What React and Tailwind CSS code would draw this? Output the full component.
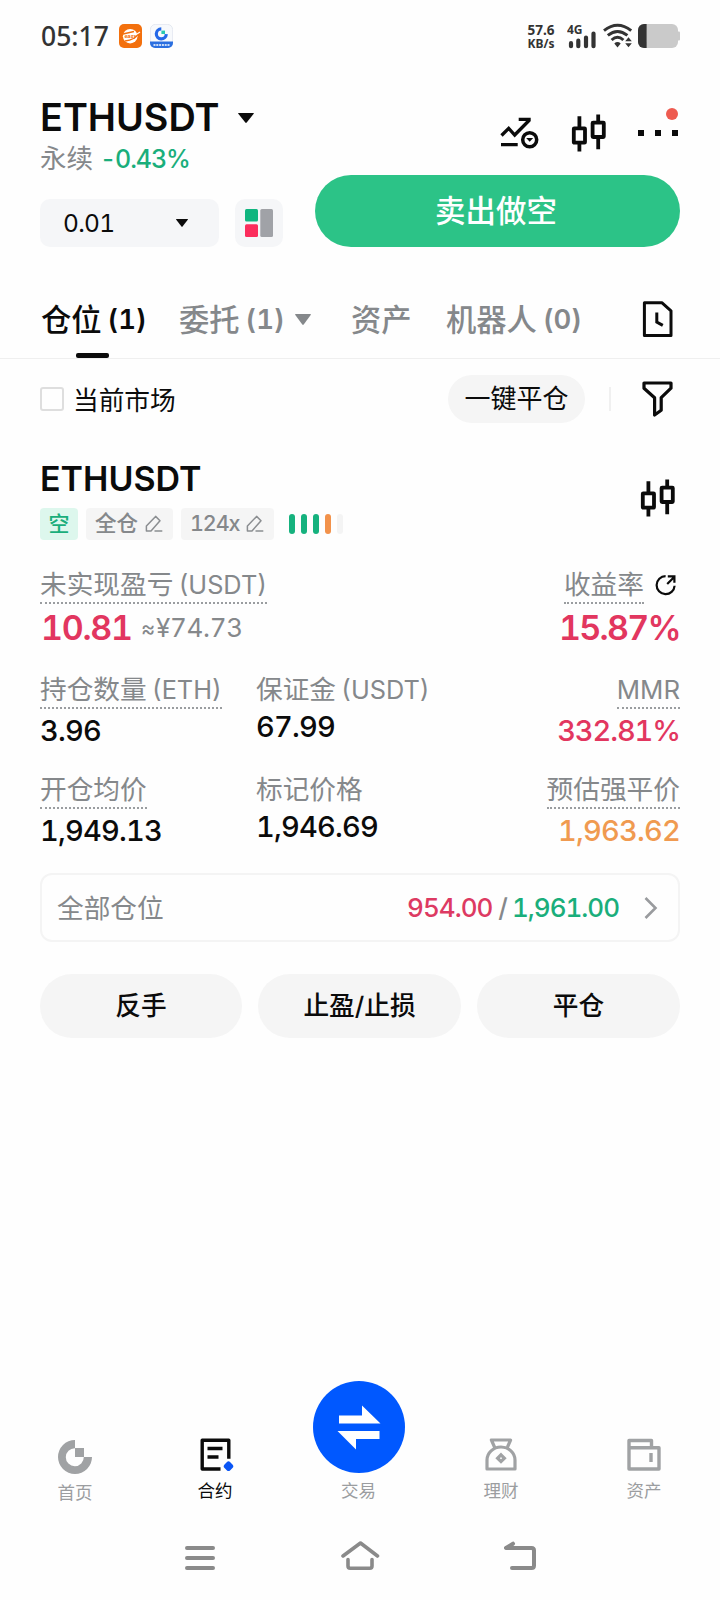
import React from 'react';

const tabs = [
    { label: '仓位', count: '(1)', active: true, style: 'w-[107px]' },
    { label: '委托', count: '(1)', caret: true, style: 'ml-[31px] w-[134px]' },
    { label: '资产', style: 'ml-[38px] w-[62px]' },
    { label: '机器人', count: '(0)', style: 'ml-[33px] w-[140px]' },
];

const CandleIcon = () => (
    <svg width="36" height="38" viewBox="0 0 36 38" fill="none" stroke="#0b0b0b" strokeWidth="3.8">
        <rect x="2.8" y="14.3" width="11.2" height="14.4" rx="0.5" />
        <path d="M8.4 2.3v12M8.4 28.7v8.8M27.2 .5v8.8M27.2 23v12.2" />
        <rect x="21.6" y="8.6" width="11.2" height="14.4" rx="0.5" />
    </svg>
);

const TrendIcon = () => (
    <svg width="40" height="34" viewBox="0 0 40 34" fill="none" stroke="#0b0b0b" strokeWidth="3.3">
        <path d="M1.5 19.5l7.2-7.2 6 6.7L29.5 4" />
        <path d="M18.7 3.4h12M1 28.7h16.7" />
        <circle cx="29.7" cy="23.7" r="7" strokeWidth="3.5" />
        <path d="M26.2 22h7l-3.5 3.8z" fill="#0b0b0b" stroke="none" />
    </svg>
);

const Caret = ({ className }) => (
    <svg className={className} viewBox="0 0 16 10" preserveAspectRatio="none" fill="currentColor">
        <path d="M.6 0h14.8q.8 0 .3.8L8.7 9.5q-.7.8-1.4 0L.3.8Q-.2 0 .6 0z" />
    </svg>
);

const PencilIcon = () => (
    <svg width="18" height="18" viewBox="0 0 18 18" fill="none" stroke="#8b8e91" strokeWidth="1.5">
        <path d="M1.4 16V11L10.6 1.4 15 5.8 6 16zM9.5 16h7.8" strokeLinejoin="round" />
    </svg>
);

const StatusBar = () => (
    <div className="flex h-[72px] shrink-0 items-center pl-[41px] pr-[40px] text-[#333]">
        <span className="w-[78px] whitespace-nowrap font-['Noto_Sans'] text-[26.5px] font-medium leading-none">05:17</span>
        <svg width="23" height="24" viewBox="0 0 23 24">
            <rect width="23" height="24" rx="5" fill="#f3700d" />
            <circle cx="11.2" cy="12.2" r="7.3" fill="#fff" />
            <path d="M4 10l11-2.5M6 17q10-1 14-8" stroke="#f3700d" strokeWidth="1.3" fill="none" />
            <path d="M18 10l3-2" stroke="#fff" strokeWidth="1.2" />
            <text x="5.4" y="14" fontSize="6" fontWeight="700" fontStyle="italic" fontFamily="Roboto, sans-serif" fill="#f3700d">easy</text>
        </svg>
        <svg className="ml-[8px]" width="23" height="24" viewBox="0 0 23 24">
            <rect x=".4" y=".4" width="22.2" height="23.2" rx="5" fill="#f7f9fc" stroke="#dfe5ee" strokeWidth=".8" />
            <path d="M0 17.6h23v1.4a5 5 0 0 1-5 5H5a5 5 0 0 1-5-5z" fill="#2b6fe0" />
            <path d="M11.3 4.9a5 5 0 1 0 5 5.3" fill="none" stroke="#2468e8" strokeWidth="3.2" />
            <rect x="11.4" y="6.6" width="3.6" height="3.4" fill="#27c9b0" />
            <path d="M3.5 21h16" stroke="#fff" strokeWidth="1.6" strokeDasharray="2 .8" />
        </svg>
        <div className="ml-auto w-[32px] whitespace-nowrap text-center font-['Noto_Sans'] text-[13.5px] font-bold leading-[14px]">
            <div>57.6</div>
            <div className="text-[12px] leading-[13px]">KB/s</div>
        </div>
        <svg className="ml-[10px]" width="30" height="32" viewBox="0 -3 30 32">
            <text x="0" y="10.5" fontSize="12" fontWeight="700" fontFamily="Noto Sans, sans-serif" fill="#333">4G</text>
            <path d="M4 20.2v3M11.3 17.7v5.5M19 14.6v8.6M26.5 10.6v12.6" stroke="#333" strokeWidth="4.2" strokeLinecap="round" />
        </svg>
        <svg className="ml-[6px]" width="30" height="26" viewBox="0 0 30 26" fill="none" stroke="#333" strokeWidth="3">
            <path d="M1 7.6Q14.5-3 28.2 7.6M4.8 12.4Q14.5 4.6 24.4 12.4M8.6 17Q14.5 11.6 20.4 17" />
            <path d="M14.5 24.4l-3.2-4q3.2-2.6 6.4 0z" fill="#333" stroke="none" />
            <path d="M22.2 18.3l3.3-4 3.3 4zM22.2 20.3h6.6l-3.3 4z" fill="#333" stroke="none" />
        </svg>
        <svg className="ml-[5px]" width="42" height="24" viewBox="0 0 42 24">
            <rect width="40" height="24" rx="6" fill="#cacaca" />
            <rect x="39" y="7.5" width="3" height="9" rx="1" fill="#cacaca" />
            <path d="M8.6 0v24H6a6 6 0 0 1-6-6V6a6 6 0 0 1 6-6z" fill="#333" />
        </svg>
    </div>
);

const Header = () => (
    <div className="flex h-[175px] shrink-0 justify-between px-[40px]">
        <div className="pt-[24px]">
            <div className="flex h-[44px] items-center">
                <h1 className="w-[198px] whitespace-nowrap text-[37.8px] font-semibold leading-none">ETHUSDT</h1>
                <Caret className="h-[10px] w-[16px]" />
            </div>
            <div className="flex h-[37px] items-center whitespace-nowrap">
                <span className="w-[60px] text-[26.5px] text-[#85888b]">永续</span>
                <span className="pt-[2px] text-[25px] font-medium tracking-[-1.1px] text-[#1aae7b]">-0.43%</span>
            </div>
            <div className="mt-[22px] flex gap-[16px]">
                <div className="flex h-[48px] w-[179px] items-center justify-between rounded-[10px] bg-[#f5f6f8] pl-[23px] pr-[31px]">
                    <span className="text-[24.5px] leading-none tracking-[-0.7px]">0.01</span>
                    <Caret className="h-[8px] w-[12px]" />
                </div>
                <div className="flex h-[48px] w-[48px] items-center justify-center rounded-[10px] bg-[#f5f6f8]">
                    <svg width="28" height="28" viewBox="0 0 28 28">
                        <rect width="13" height="12.5" rx="1.5" fill="#10b57f" />
                        <rect y="15.3" width="13" height="12.7" rx="1.5" fill="#fb2d5c" />
                        <rect x="15.3" width="12.7" height="28" rx="1.5" fill="#a0a2a7" />
                    </svg>
                </div>
            </div>
        </div>
        <div className="w-[365px] pt-[42px]">
            <div className="flex h-[38px] items-center justify-end">
                <TrendIcon />
                <div className="ml-[31px]"><CandleIcon /></div>
                <div className="relative ml-[31px] flex w-[42px] gap-[11px]">
                    <i className="h-[6px] w-[6px] bg-[#0b0b0b]" />
                    <i className="h-[6px] w-[6px] bg-[#0b0b0b]" />
                    <i className="h-[6px] w-[6px] bg-[#0b0b0b]" />
                    <b className="absolute right-[2px] top-[-22px] h-[12px] w-[12px] rounded-full bg-[#ee5b50]" />
                </div>
            </div>
            <button className="mt-[23px] block h-[72px] w-full rounded-full bg-[#2cc387] pr-[3px] pt-[1px] text-[30.5px] font-medium leading-none text-white">
                卖出做空
            </button>
        </div>
    </div>
);

const Tabs = () => (
    <div className="flex h-[112px] shrink-0 border-b border-[#efefef] pl-[41px] pt-[44px]">
        {tabs.map((tab) => (
            <div key={tab.label} className={tab.style}>
                <div className={tab.active ? 'flex h-[56px] items-center whitespace-nowrap' : 'flex h-[56px] items-center whitespace-nowrap text-[#85888b]'}>
                    <span className="pt-[2px] text-[30.3px] font-medium leading-none">{tab.label}</span>
                    {tab.count && <span className="ml-[6px] pt-[1px] text-[27.5px] font-semibold leading-none tracking-[-0.1px]">{tab.count}</span>}
                    {tab.caret && <Caret className="ml-[10px] h-[11px] w-[16px]" />}
                </div>
                {tab.active && <div className="ml-[35px] mt-[6px] h-[5px] w-[33px] rounded-[2px] bg-[#0b0b0b]" />}
            </div>
        ))}
        <svg className="ml-[56px] mt-[10px]" width="31" height="36" viewBox="0 0 31 36" fill="none" stroke="#0b0b0b" strokeWidth="3">
            <path d="M2.4 1.7h17.4L29 9.8v24.6H2.4z" strokeLinejoin="round" />
            <path d="M14.8 11.5v9.6l6 3.3" />
        </svg>
    </div>
);

const Label = ({ children, dotted, unit }) => (
    <div className={dotted
        ? 'flex h-[34px] w-fit items-start whitespace-nowrap border-b-2 border-dotted border-[#9a9da0] font-normal text-[#85888b]'
        : 'flex h-[30px] w-fit items-start whitespace-nowrap font-normal text-[#85888b]'}>
        <span className="text-[26.7px] leading-[29px]">{children}</span>
        {unit && <span className="ml-[5px] text-[25.3px] leading-[30px]">{unit}</span>}
    </div>
);

const Tag = ({ children }) => (
    <span className="flex h-[32px] items-center gap-[7px] rounded-[4px] bg-[#f5f5f5] pl-[9px] pr-[10px] text-[21.5px] font-medium leading-none text-[#85888b]">
        {children}
        <PencilIcon />
    </span>
);

const Position = () => (
    <div className="flex shrink-0 flex-col px-[40px] pt-[18px]">
        <div className="flex justify-between">
            <div>
                <h2 className="flex h-[44px] items-center text-[34px] font-semibold leading-none">ETHUSDT</h2>
                <div className="mt-[7px] flex gap-[8px] whitespace-nowrap">
                    <span className="flex h-[32px] w-[38px] items-center justify-center rounded-[4px] bg-[#ddf7ed] text-[21px] font-medium text-[#1aae7b]">空</span>
                    <Tag>全仓</Tag>
                    <Tag><span className="tracking-[-1.1px]">124x</span></Tag>
                    <div className="ml-[7px] mt-[6px] flex gap-[6px]">
                        <i className="h-[20px] w-[6px] rounded-full bg-[#16b27e]" />
                        <i className="h-[20px] w-[6px] rounded-full bg-[#16b27e]" />
                        <i className="h-[20px] w-[6px] rounded-full bg-[#16b27e]" />
                        <i className="h-[20px] w-[6px] rounded-full bg-[#f2924b]" />
                        <i className="h-[20px] w-[6px] rounded-full bg-[#f4f4f4]" />
                    </div>
                </div>
            </div>
            <div className="mr-[4px] mt-[22px]"><CandleIcon /></div>
        </div>

        <div className="mt-[30px] flex h-[105px] justify-between">
            <div>
                <Label dotted unit="(USDT)">未实现盈亏</Label>
                <div className="flex h-[48px] items-center whitespace-nowrap">
                    <span className="w-[101px] pl-[1px] text-[34px] font-semibold leading-none tracking-[-1.3px] text-[#e2365f]">10.81</span>
                    <span className="w-[15px] text-[22px] leading-none text-[#85888b]">≈</span>
                    <span className="text-[26px] leading-none tracking-[-0.3px] text-[#85888b]">¥74.73</span>
                </div>
            </div>
            <div className="flex flex-col items-end">
                <div className="flex">
                    <Label dotted>收益率</Label>
                    <svg className="ml-[11px] mr-[3px] mt-[4px]" width="22" height="22" viewBox="0 0 22 22" fill="none" stroke="#0b0b0b" strokeWidth="2.2">
                        <path d="M10.6 2.2a9 9 0 1 0 9 9.6M12.2 10L19 3.2M12.8 2.3h6.6v6.5" />
                    </svg>
                </div>
                <div className="flex h-[48px] items-center text-[34px] font-semibold leading-none tracking-[-1.7px] text-[#e2365f]">15.87%</div>
            </div>
        </div>

        <div className="grid h-[100px] grid-cols-[216px_1fr_auto] whitespace-nowrap text-[29px] font-medium tracking-[-0.8px]">
            <div>
                <div className="tracking-normal"><Label dotted unit="(ETH)">持仓数量</Label></div>
                <div className="h-[44px] leading-[44px]">3.96</div>
            </div>
            <div>
                <div className="tracking-normal"><Label unit="(USDT)">保证金</Label></div>
                <div className="h-[44px] leading-[44px]">67.99</div>
            </div>
            <div className="flex flex-col items-end">
                <div className="flex h-[34px] border-b-2 border-dotted border-[#9a9da0] text-[25.8px] font-normal leading-[29px] tracking-normal text-[#85888b]">MMR</div>
                <div className="h-[44px] leading-[44px] tracking-[-1.1px] text-[#e2365f]">332.81%</div>
            </div>
        </div>
        <div className="grid h-[98px] grid-cols-[216px_1fr_auto] whitespace-nowrap text-[29px] font-medium tracking-[-0.8px]">
            <div>
                <div className="tracking-normal"><Label dotted>开仓均价</Label></div>
                <div className="h-[44px] leading-[44px]">1,949.13</div>
            </div>
            <div>
                <div className="tracking-normal"><Label>标记价格</Label></div>
                <div className="h-[44px] leading-[44px]">1,946.69</div>
            </div>
            <div className="flex flex-col items-end">
                <div className="tracking-normal"><Label dotted>预估强平价</Label></div>
                <div className="h-[44px] leading-[44px] text-[#f09a50]">1,963.62</div>
            </div>
        </div>

        <div className="flex h-[69px] items-center rounded-[12px] border-2 border-[#f4f4f4] pl-[15px] pr-[20px] text-[26px] font-medium tracking-[-1px]">
            <span className="mr-auto pt-[1px] text-[26.7px] font-normal leading-none tracking-normal text-[#85888b]">全部仓位</span>
            <span className="text-[#dd3a62]">954.00</span>
            <span className="ml-[6px] mr-[5px] text-[#85888b]">/</span>
            <span className="text-[#1aae7b]">1,961.00</span>
            <svg className="ml-[25px]" width="14" height="22" viewBox="0 0 14 22" fill="none" stroke="#999b9e" strokeWidth="2.6">
                <path d="M1.5 1l10 10-10 10" />
            </svg>
        </div>

        <div className="mt-[32px] flex justify-between">
            <button className="h-[64px] w-[202px] rounded-full bg-[#f5f5f5] text-[25.7px] font-medium">反手</button>
            <button className="h-[64px] w-[203px] rounded-full bg-[#f5f5f5] text-[25.7px] font-medium">止盈/止损</button>
            <button className="h-[64px] w-[203px] rounded-full bg-[#f5f5f5] text-[25.7px] font-medium">平仓</button>
        </div>
    </div>
);

const BottomNav = () => (
    <div className="mt-auto grid h-[129px] shrink-0 grid-cols-[140px_140px_147px_138px_148px] items-end pl-[5px] text-center text-[17.5px] leading-[22px] text-[#9b9da0]">
        <div className="flex flex-col items-center pb-[6px]">
            <svg width="34" height="34" viewBox="0 0 34 34" fill="#a0a2a4">
                <path d="M17 0v8.2A9 9 0 1 0 25.8 17H34A17 17 0 1 1 17 0z" />
                <rect x="17" y="8" width="9" height="9" />
            </svg>
            <span className="mt-[8px]">首页</span>
        </div>
        <div className="flex flex-col items-center pb-[8px] text-[#0b0b0b]">
            <svg className="ml-[4px]" width="34" height="34" viewBox="0 0 34 34" fill="none" stroke="#0b0b0b" strokeWidth="3.4">
                <path d="M20.5 31H2.2V2.2h26.6v18.5" strokeLinejoin="round" />
                <path d="M7.5 10.5h15M7.5 19h11" />
                <path d="M28.5 26l2.2 2.2-2.2 2.2-2.2-2.2z" fill="#0a55f5" stroke="#0a55f5" strokeWidth="5" strokeLinejoin="round" />
            </svg>
            <span className="mt-[8px]">合约</span>
        </div>
        <div className="flex flex-col items-center pb-[8px]">
            <svg width="92" height="92" viewBox="0 0 92 92">
                <circle cx="46" cy="46" r="46" fill="#0058ff" />
                <path d="M26 34.5h23V24.5L67.5 42.6H26zM66.5 50v8H43v10.5L24.5 50z" fill="#fff" />
            </svg>
            <span className="mt-[7px]">交易</span>
        </div>
        <div className="flex flex-col items-center pb-[8px]">
            <svg width="32" height="33" viewBox="0 0 32 33" fill="none" stroke="#a0a2a4" strokeWidth="3.2">
                <path d="M9.5 9L6.4 2h19.2l-3.1 7M2 31V22a14 13 0 0 1 28 0V31z" strokeLinejoin="round" />
                <path d="M16 16.8l3.4 3.4-3.4 3.4-3.4-3.4z" />
            </svg>
            <span className="mt-[9px]">理财</span>
        </div>
        <div className="flex flex-col items-center pb-[8px]">
            <svg width="34" height="33" viewBox="0 0 34 33" fill="none" stroke="#a0a2a4" strokeWidth="3.4">
                <path d="M2 31V2.5h22.5v7M2 9.8h30V31H2z" strokeLinejoin="round" />
                <path d="M24 15v9" />
            </svg>
            <span className="mt-[9px]">资产</span>
        </div>
    </div>
);

const SystemBar = () => (
    <div className="flex h-[90px] shrink-0 pl-[185px] pt-[31px]">
        <svg width="30" height="30" viewBox="0 0 30 30" stroke="#8a8a8a" strokeWidth="4" strokeLinecap="round">
            <path d="M2 7h26M2 17h26M2 27h26" />
        </svg>
        <svg className="ml-[126px]" width="39" height="30" viewBox="0 0 39 30" fill="none" stroke="#8a8a8a" strokeWidth="3.6" strokeLinecap="round" strokeLinejoin="round">
            <path d="M2 15L19.5 2 36.5 15M7 18.5V25q0 2.2 2.2 2.2h19.6q2.2 0 2.2-2.2v-6.5" />
        </svg>
        <svg className="ml-[124px]" width="33" height="30" viewBox="0 0 33 30" fill="none" stroke="#8a8a8a" strokeWidth="4" strokeLinecap="round" strokeLinejoin="round">
            <path d="M9 2.7L2 7h25.5q2.5 0 2.5 2.5v15q0 2.5-2.5 2.5H8" />
        </svg>
    </div>
);

const App = () => {
    return (
        <div className="flex h-[1600px] w-[720px] flex-col overflow-hidden bg-[#fefefe] font-['Inter','Noto_Sans_CJK_SC',sans-serif] tabular-nums text-[#0b0b0b]">
            <StatusBar />
            <Header />
            <Tabs />
            <div className="flex h-[80px] shrink-0 items-center pl-[40px]">
                <i className="h-[24px] w-[24px] rounded-[3px] border-2 border-[#dedede]" />
                <span className="ml-[9px] pt-[3px] text-[25.7px] leading-none">当前市场</span>
                <span className="ml-auto flex h-[48px] w-[137px] items-center justify-center rounded-full bg-[#f5f5f5] text-[26px] leading-none">一键平仓</span>
                <i className="ml-[24px] h-[24px] w-[2px] bg-[#f0f0f0]" />
                <svg className="ml-[31px] mr-[47px]" width="31" height="36" viewBox="0 0 31 36" fill="none" stroke="#0b0b0b" strokeWidth="3.2" strokeLinejoin="round">
                    <path d="M2 2h27v5.2l-9.8 9.5v12.6L12.6 34V16.7L2 7.2z" />
                </svg>
            </div>
            <Position />
            <BottomNav />
            <SystemBar />
        </div>
    );
};

export default App;
